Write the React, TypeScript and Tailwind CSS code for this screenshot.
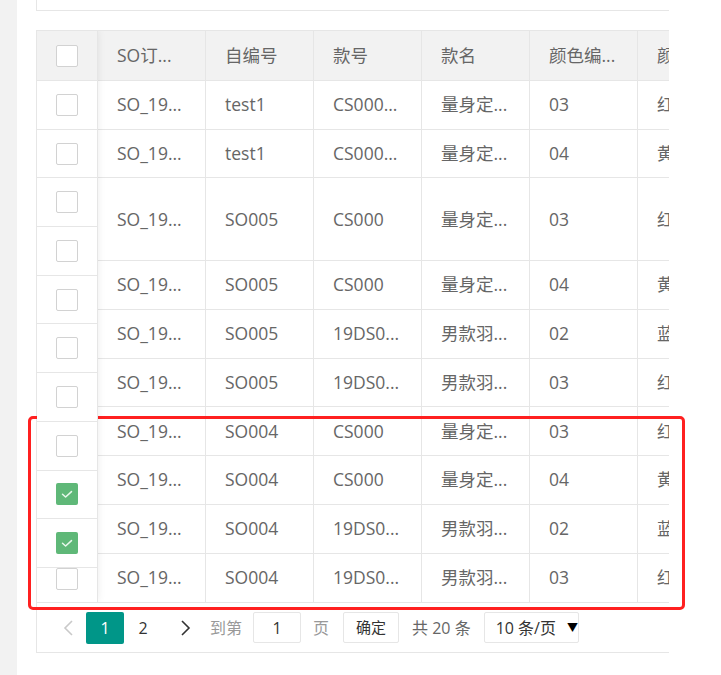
import React from "react";

type Row = { tall?: boolean; cells: string[] };

const headers = ["SO订...", "自编号", "款号", "款名", "颜色编...", "颜色"];

const rows: Row[] = [
  { cells: ["SO_19...", "test1", "CS000...", "量身定...", "03", "红色"] },
  { cells: ["SO_19...", "test1", "CS000...", "量身定...", "04", "黄色"] },
  { tall: true, cells: ["SO_19...", "SO005", "CS000", "量身定...", "03", "红色"] },
  { cells: ["SO_19...", "SO005", "CS000", "量身定...", "04", "黄色"] },
  { cells: ["SO_19...", "SO005", "19DS0...", "男款羽...", "02", "蓝色"] },
  { cells: ["SO_19...", "SO005", "19DS0...", "男款羽...", "03", "红色"] },
  { cells: ["SO_19...", "SO004", "CS000", "量身定...", "03", "红色"] },
  { cells: ["SO_19...", "SO004", "CS000", "量身定...", "04", "黄色"] },
  { cells: ["SO_19...", "SO004", "19DS0...", "男款羽...", "02", "蓝色"] },
  { cells: ["SO_19...", "SO004", "19DS0...", "男款羽...", "03", "红色"] },
];

// fixed checkbox column has its own row heights (not aligned with the body)
const fixedChecked = [false, false, false, false, false, false, false, false, true, true, false];

function Checkbox({ checked }: { checked?: boolean }) {
  if (checked) {
    return (
      <span className="flex h-[22px] w-[22px] items-center justify-center rounded-[2px] bg-[#5fb878]">
        <svg viewBox="0 0 22 22" className="h-[22px] w-[22px]" fill="none" stroke="#e8f7ec" strokeWidth="1.5" strokeLinecap="round" strokeLinejoin="round">
          <path d="M6.5 11.2 L9.6 14 L15.5 8.6" />
        </svg>
      </span>
    );
  }
  return <span className="block h-[22px] w-[22px] rounded-[2px] border border-[#d2d2d2] bg-white" />;
}

function Chevron({ dir, color }: { dir: "left" | "right"; color: string }) {
  return (
    <svg viewBox="0 0 10 16" className="h-[16px] w-[10px]" fill="none" stroke={color} strokeWidth="1.6">
      {dir === "left" ? <path d="M9 1 L2 8 L9 15" /> : <path d="M1 1 L8 8 L1 15" />}
    </svg>
  );
}

export default function App() {
  const font = { fontFamily: '"Open Sans", "Noto Sans CJK SC", sans-serif' };
  const cell = "flex h-full w-[108px] shrink-0 items-center overflow-hidden whitespace-nowrap border-r border-[#e6e6e6] pl-[19px]";

  return (
    <div className="relative flex h-[675px] w-full overflow-hidden bg-white text-[#666]" style={font}>
      <div className="w-[17px] shrink-0 bg-[#f2f2f2]" />

      <div className="ml-[19px] w-[633px] shrink-0 overflow-hidden">
        {/* search box (scrolled out) */}
        <div className="h-[11px] border-b border-l border-[#e6e6e6]" />

        {/* table */}
        <div className="mt-[19px] flex h-[573px] overflow-hidden border-b border-l border-t border-[#e6e6e6]">
          {/* fixed column */}
          <div className="relative z-10 w-[61px] shrink-0 border-r border-[#e6e6e6] bg-white shadow-[0_-1px_8px_rgba(0,0,0,0.08)]">
            <div className="flex h-[50px] items-center justify-center border-b border-[#e6e6e6] bg-[#f2f2f2]">
              <Checkbox />
            </div>
            {fixedChecked.map((c, i) =>
              i === fixedChecked.length - 1 ? (
                <div key={i} className="flex h-[40px] items-start justify-center">
                  <Checkbox checked={c} />
                </div>
              ) : (
                <div key={i} className="flex h-[48.7px] items-center justify-center border-b border-[#e6e6e6]">
                  <Checkbox checked={c} />
                </div>
              )
            )}
          </div>

          {/* scrolling body */}
          <div className="flex w-[800px] shrink-0 flex-col text-[17.5px] leading-none">
            <div className="flex h-[50px] shrink-0 border-b border-[#e6e6e6] bg-[#f2f2f2]">
              {headers.map((h) => (
                <div key={h} className={cell}>
                  {h}
                </div>
              ))}
            </div>
            {rows.map((r, i) => (
              <div
                key={i}
                className={`flex shrink-0 ${r.tall ? "h-[83px]" : "h-[48.7px]"} ${
                  i < rows.length - 1 ? "border-b border-[#e6e6e6]" : ""
                }`}
              >
                {r.cells.map((c, j) => (
                  <div key={j} className={cell}>
                    {c}
                  </div>
                ))}
              </div>
            ))}
          </div>
        </div>

        {/* pagination */}
        <div className="flex h-[50px] w-[800px] items-center whitespace-nowrap border-b border-l border-[#e6e6e6] text-[16px] leading-none">
          <span className="ml-[12px] flex w-[37px] justify-center">
            <Chevron dir="left" color="#c9c9c9" />
          </span>
          <span className="flex h-[32px] w-[38px] items-center justify-center rounded-[2px] bg-[#009688] text-white">1</span>
          <span className="flex h-[32px] w-[38px] items-center justify-center text-[#333]">2</span>
          <span className="flex w-[48px] justify-center">
            <Chevron dir="right" color="#333" />
          </span>
          <span className="text-[#999]">到第</span>
          <span className="ml-[11px] flex h-[31px] w-[48px] items-center justify-center rounded-[2px] border border-[#e6e6e6] text-[#333]">1</span>
          <span className="ml-[12px] text-[#999]">页</span>
          <span className="ml-[14px] flex h-[31px] w-[56px] items-center justify-center rounded-[2px] border border-[#e6e6e6] text-[15px] text-[#333]">确定</span>
          <span className="ml-[13px] text-[#666]">共 20 条</span>
          <span className="ml-[13px] flex h-[31px] w-[95px] shrink-0 items-center whitespace-nowrap rounded-[2px] border border-[#e6e6e6] pl-[11px] text-[#333]">
            <span>10 条/页</span>
            <span className="ml-[11px] text-[11px] text-black">▼</span>
          </span>
        </div>
      </div>

      {/* annotation */}
      <div className="pointer-events-none absolute left-[28px] top-[416px] h-[194px] w-[657px] rounded-[5px] border-[3px] border-[#ff2020]" />
    </div>
  );
}
